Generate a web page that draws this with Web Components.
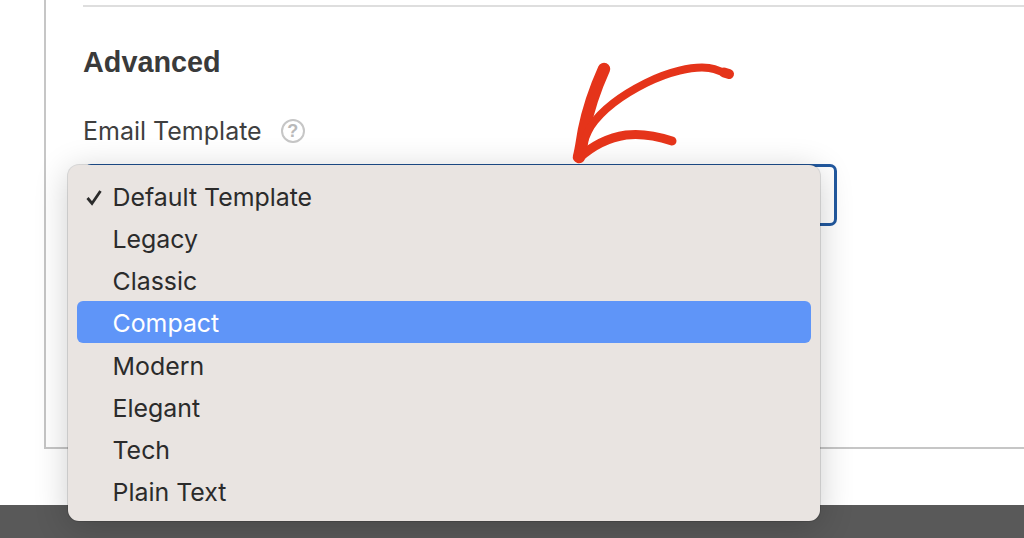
<!DOCTYPE html>
<html lang="en">
<head>
<meta charset="utf-8">
<title>Email Template</title>
<style>
  html, body { margin: 0; height: 538px; overflow: hidden; background: #fff; }
  body { font-family: Inter, "Liberation Sans", sans-serif; }
</style>
</head>
<body>
<settings-page>
  <select-menu>
    <menu-option checked>Default Template</menu-option>
    <menu-option>Legacy</menu-option>
    <menu-option>Classic</menu-option>
    <menu-option active>Compact</menu-option>
    <menu-option>Modern</menu-option>
    <menu-option>Elegant</menu-option>
    <menu-option>Tech</menu-option>
    <menu-option>Plain Text</menu-option>
  </select-menu>
</settings-page>

<script>
class SettingsPage extends HTMLElement {
  constructor() {
    super();
    this.attachShadow({ mode: 'open' });
  }

  connectedCallback() {
    this.shadowRoot.innerHTML = `
      <style>
        :host { display: flex; flex-direction: column; height: 538px; position: relative; overflow: hidden; }
        .panel {
          height: 449px;
          margin-left: 44px;
          padding: 5px 0 0 37px;
          box-sizing: border-box;
          border-left: 2px solid #c6c6c6;
          border-bottom: 2px solid #c6c6c6;
        }
        .rule { height: 2px; background: #dedede; }
        h2 {
          margin: 36px 0 0;
          font: 700 28.8px/38px "Liberation Sans", sans-serif;
          color: #3a3a3a;
        }
        .label {
          display: flex;
          align-items: center;
          gap: 19px;
          margin-top: 36px;
          height: 28px;
          font-size: 25px;
          color: #3f3f3f;
        }
        .help {
          width: 24px;
          height: 24px;
          box-sizing: border-box;
          border: 2.5px solid #c6c6c6;
          border-radius: 50%;
          color: #b9b9b9;
          font: 700 18px/20px "Liberation Sans", sans-serif;
          text-align: center;
        }
        .field {
          position: relative;
          width: 753px;
          height: 62px;
          margin: 19px 0 0 1px;
          box-sizing: border-box;
          border: 3px solid #22599f;
          border-radius: 7px;
        }
        .arrow { position: absolute; left: 560px; top: 50px; width: 190px; height: 120px; }
        .footer { height: 33px; margin-top: 56px; background: #595959; }
      </style>
      <div class="panel">
        <div class="rule"></div>
        <h2>Advanced</h2>
        <div class="label">Email Template <span class="help">?</span></div>
        <div class="field"><slot></slot></div>
      </div>
      <div class="footer"></div>
      <svg class="arrow" viewBox="560 50 190 120" fill="none" stroke="#e5341a" stroke-linecap="round" stroke-linejoin="round">
        <path d="M604 69C595 89 588 110 584 130C582 141 581 150 579 157" stroke-width="12.5"/>
        <path d="M729 74C722 73 718 69 709 68C692 66 668 72 646 83C622 95 602 110 591 126C586 134 582 146 579 157" stroke-width="8"/>
        <path d="M729 74L724 72.5" stroke-width="10"/>
        <path d="M672 141C660 137 642 133 626 135C606 138 590 148 579 158" stroke-width="9"/>
      </svg>
    `;
  }
}

class SelectMenu extends HTMLElement {
  constructor() {
    super();
    this.attachShadow({ mode: 'open' });
  }

  connectedCallback() {
    this.shadowRoot.innerHTML = `
      <style>
        :host {
          display: block;
          position: absolute;
          left: -19px;
          top: -2px;
          width: 752px;
          height: 356px;
          padding: 9.5px 9px;
          box-sizing: border-box;
          background: #e9e4e1;
          border-radius: 11px;
          box-shadow: 0 0 0 1px rgba(0,0,0,.12), 0 6px 34px rgba(0,0,0,.2);
        }
      </style>
      <slot></slot>
    `;
  }
}

class MenuOption extends HTMLElement {
  constructor() {
    super();
    this.attachShadow({ mode: 'open' });
  }

  connectedCallback() {
    const mark = this.hasAttribute('checked')
      ? '<svg viewBox="0 0 18 18" width="18" height="18"><path d="M2.5 10 L7 15.5 L15.5 3" fill="none" stroke="currentColor" stroke-width="2.8"/></svg>'
      : '';
    this.shadowRoot.innerHTML = `
      <style>
        :host {
          display: flex;
          align-items: center;
          height: 42.14px;
          padding-top: 3px;
          box-sizing: border-box;
          border-radius: 6px;
          font-size: 24.9px;
          color: #2b2b2b;
        }
        :host([active]) { background: #5f95f8; color: #fff; }
        .check { display: flex; width: 35.5px; padding-left: 8px; box-sizing: border-box; }
      </style>
      <span class="check">${mark}</span><slot></slot>
    `;
  }
}

customElements.define('settings-page', SettingsPage);
customElements.define('select-menu', SelectMenu);
customElements.define('menu-option', MenuOption);
</script>
</body>
</html>
